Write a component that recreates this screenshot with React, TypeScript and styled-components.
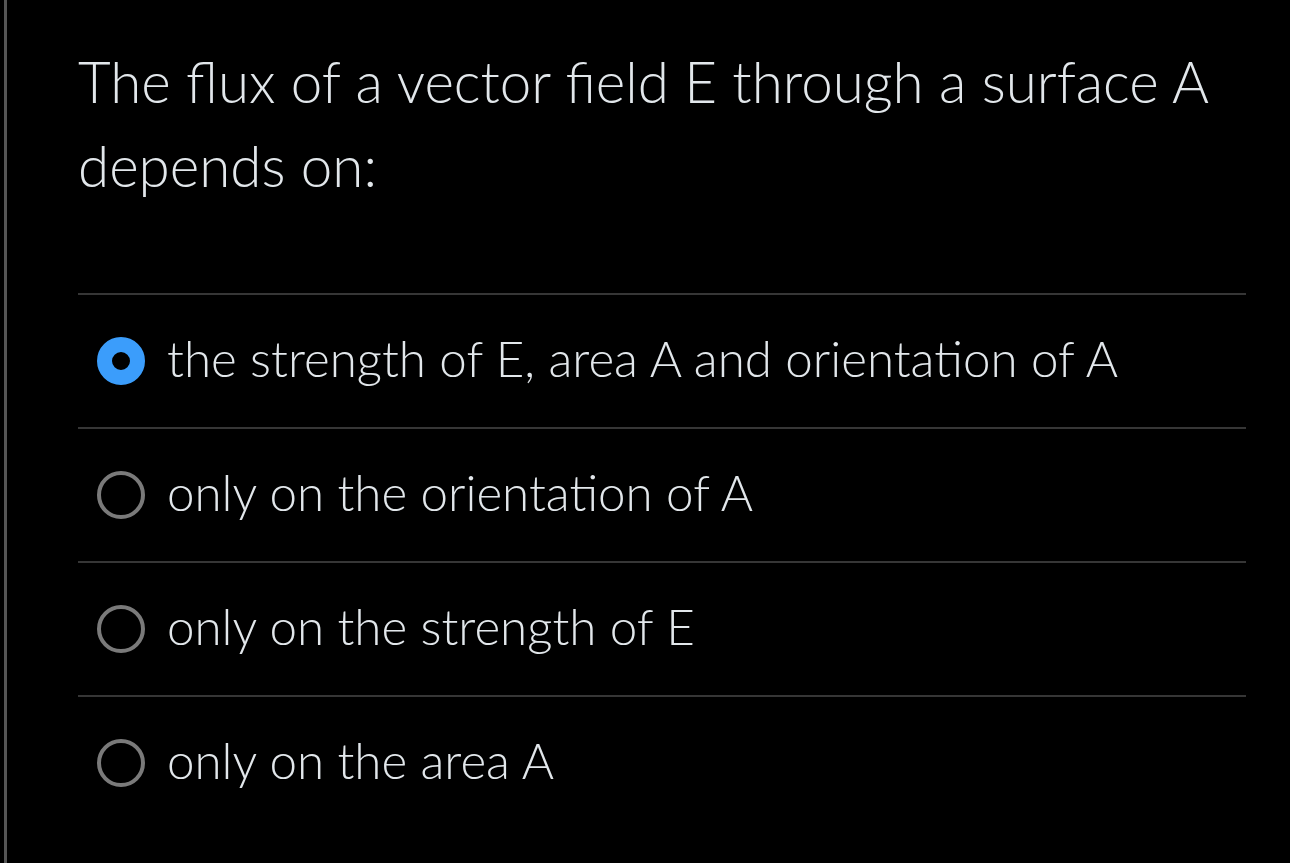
import React, { useState } from "react";
import styled, { createGlobalStyle } from "styled-components";

const options = [
    "the strength of E, area A and orientation of A",
    "only on the orientation of A",
    "only on the strength of E",
    "only on the area A",
];

const GlobalStyle = createGlobalStyle`
    html, body {
        margin: 0;
        padding: 0;
        background: #000;
    }
    body {
        font-family: "Lato", "Noto Sans", sans-serif;
        color: #e2e7eb;
    }
`;

const App = () => {
    const [selected, setSelected] = useState<number>(0);

    return (
        <>
            <GlobalStyle />
            <Page>
                <Question>
                    The flux of a vector field E through a surface A depends on:
                </Question>
                <OptionList>
                    {options.map((text, index) => (
                        <OptionRow key={index} onClick={() => setSelected(index)}>
                            <Radio checked={index === selected} />
                            <OptionText>{text}</OptionText>
                        </OptionRow>
                    ))}
                </OptionList>
            </Page>
        </>
    );
};

export default App;

const Page = styled.div`
    box-sizing: border-box;
    min-height: 863px;
    margin-left: 4px;
    border-left: 3px solid #555;
    padding: 39px 44px 0 71px;
`;

const Question = styled.h1`
    margin: 0;
    font-size: 56.5px;
    font-weight: 300;
    line-height: 84px;
    max-width: 1150px;
`;

const OptionList = styled.div`
    display: flex;
    flex-direction: column;
    margin-top: 86px;
`;

const OptionRow = styled.div`
    display: flex;
    align-items: center;
    gap: 22px;
    height: 132px;
    padding-left: 19px;
    border-top: 2px solid #363636;
    cursor: pointer;
`;

const Radio = styled.span<{ checked: boolean }>`
    box-sizing: border-box;
    flex: none;
    width: 48px;
    height: 48px;
    border-radius: 50%;
    border: ${p => (p.checked ? "15px solid #3b9dfb" : "4px solid #7a7a7a")};
`;

const OptionText = styled.span`
    font-size: 49.3px;
    font-weight: 300;
    line-height: 1.2;
    margin-top: -4px;
`;
